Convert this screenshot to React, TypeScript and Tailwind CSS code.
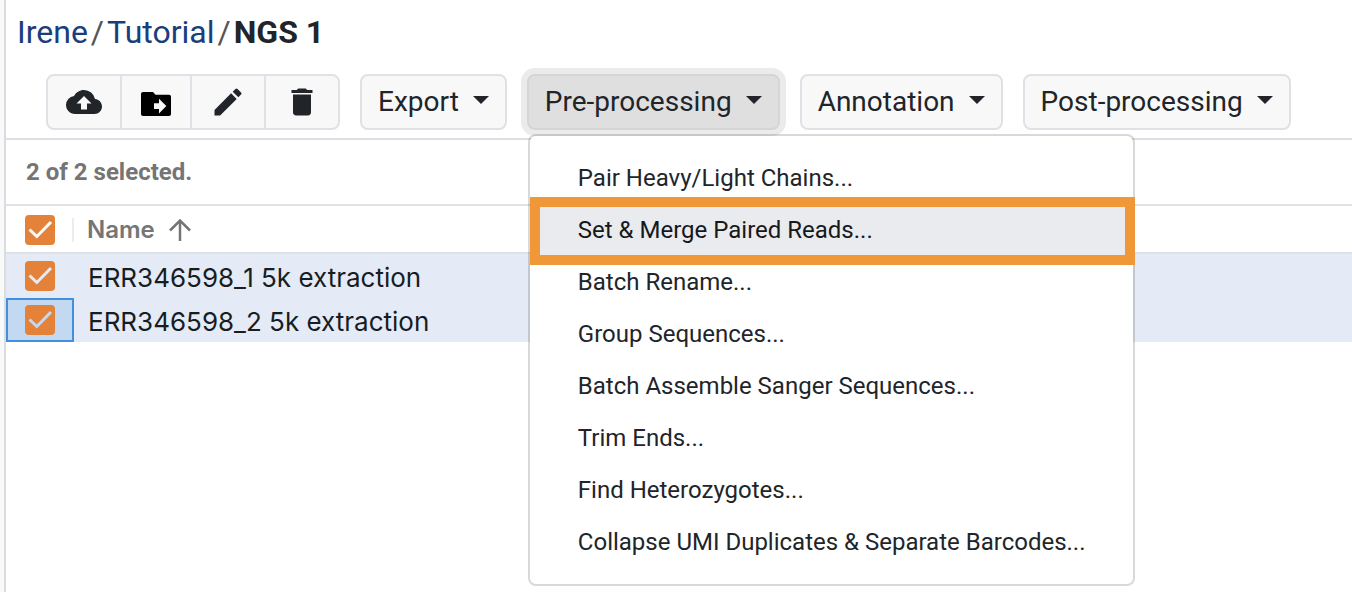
import type { ReactNode } from 'react';
import { MdCloudUpload, MdDelete, MdEdit } from 'react-icons/md';
import clsx from 'clsx';

const preProcessingItems = [
  'Pair Heavy/Light Chains...',
  'Set & Merge Paired Reads...',
  'Batch Rename...',
  'Group Sequences...',
  'Batch Assemble Sanger Sequences...',
  'Trim Ends...',
  'Find Heterozygotes...',
  'Collapse UMI Duplicates & Separate Barcodes...',
];

const documents = ['ERR346598_1 5k extraction', 'ERR346598_2 5k extraction'];

function FolderMoveIcon() {
  return (
    <svg viewBox="0 0 30 24" className="mt-1 h-6 w-[30px]" aria-hidden="true">
      <path
        fill="#000"
        fillRule="evenodd"
        d="M2 0H12L14.500 2.700H28A2 2 0 0 1 30 4.700V22A2 2 0 0 1 28 24H2A2 2 0 0 1 0 22V2A2 2 0 0 1 2 0ZM18 6.700V11.300H13V17H18V21.500L25.300 14.100Z"
      />
    </svg>
  );
}

interface IconButtonProps {
  label: string;
  className?: string;
  children: ReactNode;
}

function IconButton({ label, className = 'w-[74px]', children }: IconButtonProps) {
  return (
    <button
      type="button"
      aria-label={label}
      className={clsx(
        'flex items-center justify-center border-r-2 border-[#dee2e6] last:w-[72px] last:border-r-0',
        className,
      )}>
      {children}
    </button>
  );
}

interface DropdownButtonProps {
  label: string;
  open?: boolean;
}

function DropdownButton({ label, open = false }: DropdownButtonProps) {
  return (
    <button
      type="button"
      aria-haspopup="menu"
      aria-expanded={open}
      className={clsx(
        'flex h-14 items-center gap-3.5 rounded-lg border-2 px-4 text-[28px] leading-8 whitespace-nowrap text-[#212529]',
        open
          ? 'border-[#d5d5d5] bg-[#dfdfdf] ring-6 ring-[#ebebeb]'
          : 'border-[#dee2e6] bg-[#f8f8f8]',
      )}>
      {label}
      <svg viewBox="0 0 16 8" className="mb-1 h-2 w-4 fill-current" aria-hidden="true">
        <path d="M0 0H16L8 8Z" />
      </svg>
    </button>
  );
}

interface CheckboxProps {
  label: string;
  tickClassName: string;
}

function Checkbox({ label, tickClassName }: CheckboxProps) {
  return (
    <label className="relative mx-auto block size-[30px]">
      <input
        type="checkbox"
        defaultChecked
        aria-label={label}
        className="block size-[30px] appearance-none rounded-sm bg-[#e48239]"
      />
      <svg
        viewBox="0 0 30 30"
        className={clsx('pointer-events-none absolute inset-0', tickClassName)}
        fill="none"
        strokeWidth="3"
        aria-hidden="true">
        <path d="M4.500 14.500L11.800 21.500L26 7" />
      </svg>
    </label>
  );
}

function PreProcessingMenu() {
  return (
    <ul
      role="menu"
      aria-label="Pre-processing"
      className="absolute top-full left-0 z-10 mt-1 ml-px w-[607px] rounded-lg border-2 border-black/15 bg-white bg-clip-padding py-4">
      {preProcessingItems.map((item, index) => (
        <li key={item} role="none" className="relative">
          <button
            type="button"
            role="menuitem"
            className={clsx(
              'block h-13 w-full px-12 text-left text-2xl whitespace-nowrap',
              index === 1 ? 'bg-[#eaebef] text-[#16181b]' : 'text-[#212529]',
            )}>
            {item}
          </button>
          {index === 1 && (
            <span className="pointer-events-none absolute -top-[7px] -right-0.5 -bottom-[9px] left-0 border-10 border-[#f09837]" />
          )}
        </li>
      ))}
    </ul>
  );
}

export default function App() {
  return (
    <div className="flex min-h-screen overflow-x-hidden bg-[#f8f9fa] pl-1 font-['Roboto',sans-serif] text-[#212529]">
      <main className="min-w-0 flex-1 border-l-2 border-[#dcdcdf] bg-white">
        <header className="border-b-2 border-[#dfdfe1] pb-2">
          <nav aria-label="Breadcrumb" className="flex h-16 items-center gap-[3px] pl-[11px] text-[32px] leading-10">
            <a href="#irene" className="text-[#1a3e7c]">Irene</a>
            <span className="text-[#555]">/</span>
            <a href="#tutorial" className="text-[#1a3e7c]">Tutorial</a>
            <span className="text-[#555]">/</span>
            <h1 className="font-bold">NGS 1</h1>
          </nav>
          <div className="flex gap-5 pt-2.5 pl-10">
            <div className="flex h-14 rounded-lg border-2 border-[#dee2e6] bg-[#f8f8f8]">
              <IconButton label="Upload"><MdCloudUpload size={36} /></IconButton>
              <IconButton label="Move to folder" className="w-[70px]"><FolderMoveIcon /></IconButton>
              <IconButton label="Edit"><MdEdit size={36} /></IconButton>
              <IconButton label="Delete"><MdDelete size={36} /></IconButton>
            </div>
            <DropdownButton label="Export" />
            <div className="relative">
              <DropdownButton label="Pre-processing" open />
              <PreProcessingMenu />
            </div>
            <DropdownButton label="Annotation" />
            <DropdownButton label="Post-processing" />
          </div>
        </header>
        <p className="flex h-16 items-center pl-5 text-2xl font-bold text-[#757575]">
          2 of 2 selected.
        </p>
        <table className="w-full border-separate border-spacing-0 text-left font-['Inter',sans-serif]">
          <thead>
            <tr className="h-[50px]">
              <th className="w-[68px] border-y-2 border-[#dee2e6] p-0 pt-0.5">
                <Checkbox label="Select all" tickClassName="stroke-white" />
              </th>
              <th className="border-y-2 border-[#dee2e6] p-0 pt-0.5 text-2xl font-semibold text-[#757575]">
                <div className="-ml-0.5 flex h-6 items-center gap-3.5 border-l-2 border-[#ececec] pl-[13px]">
                  Name
                  <svg viewBox="0 0 22 22" className="size-[22px]" fill="none" stroke="currentColor" strokeWidth="2.500" aria-hidden="true">
                    <path d="M11 22V2M1 11.500L11 1.500L21 11.500" />
                  </svg>
                </div>
              </th>
            </tr>
          </thead>
          <tbody>
            {documents.map((name, index) => (
              <tr key={name} className="h-11 bg-[#e4ebf7] text-[#181d1f]">
                <td className={clsx('w-[68px] p-0', index === 1 && 'bg-[#c3d9f1] outline-2 -outline-offset-2 outline-[#4090e2]')}>
                  <Checkbox
                    label={name}
                    tickClassName={index === 1 ? 'stroke-[#c3d9f1]' : 'stroke-[#e4ebf7]'}
                  />
                </td>
                <td className="pt-1 pr-0 pb-0 pl-3.5 text-[26px] leading-8">{name}</td>
              </tr>
            ))}
          </tbody>
        </table>
      </main>
    </div>
  );
}
